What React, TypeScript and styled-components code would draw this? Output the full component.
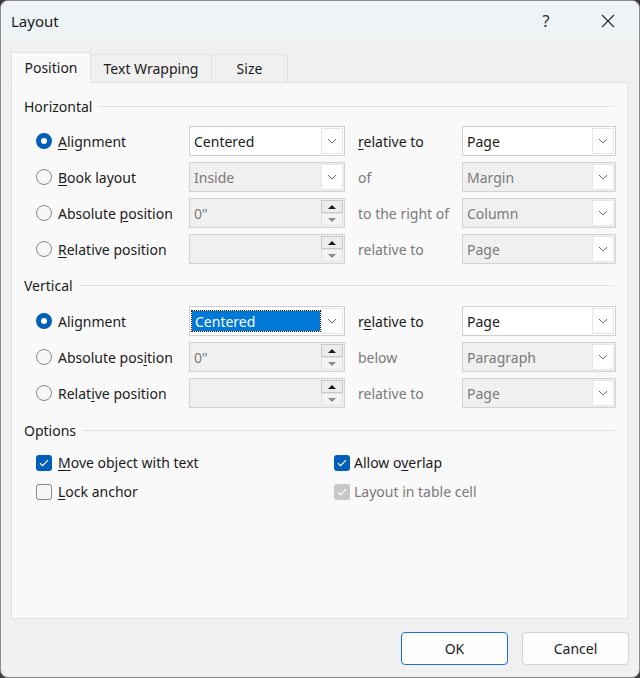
import React from "react"
import styled, { createGlobalStyle } from "styled-components"

const GlobalStyle = createGlobalStyle`
  html, body {
    margin: 0;
    padding: 0;
    background: #3c3c3c;
  }
  body {
    font-family: "Noto Sans", "Open Sans", sans-serif;
    font-size: 14px;
    color: #1b1b1b;
  }
`

const Window = styled.div`
  width: 638px;
  height: 676px;
  border: 1px solid #8c8c8c;
  border-radius: 8px;
  overflow: hidden;
  background: #f0f0f0;
  display: flex;
  flex-direction: column;
`

const TitleBar = styled.div`
  height: 39px;
  background: #eef3f6;
  display: flex;
  align-items: center;
  padding-left: 10px;
`

const Title = styled.div`
  flex: 1;
  font-size: 15px;
  color: #1a1a1a;
`

const TitleButton = styled.div`
  width: 62px;
  height: 39px;
  display: flex;
  align-items: center;
  justify-content: center;
  font-size: 16px;
  color: #2a2a2a;
`

const Body = styled.div`
  flex: 1;
  padding: 11px 10px 0 10px;
  display: flex;
  flex-direction: column;
`

const TabStrip = styled.div`
  display: flex;
  align-items: flex-end;
  height: 31px;
  position: relative;
  z-index: 1;
`

const Tab = styled.div<{ $active?: boolean; $w: number }>`
  width: ${p => p.$w}px;
  height: ${p => (p.$active ? 31 : 28)}px;
  box-sizing: border-box;
  display: flex;
  align-items: center;
  justify-content: center;
  background: ${p => (p.$active ? "#f9f9f9" : "#f0f0f0")};
  border: 1px solid #e2e2e2;
  border-bottom: ${p => (p.$active ? "1px solid #f9f9f9" : "none")};
  border-left: ${p => (p.$active ? "1px solid #e2e2e2" : "none")};
  margin-bottom: ${p => (p.$active ? "-1px" : "0")};
  font-size: 14px;
  color: #1b1b1b;
`

const Panel = styled.div`
  width: 617px;
  height: 537px;
  box-sizing: border-box;
  background: #f9f9f9;
  border: 1px solid #e2e2e2;
  padding: 14px 12px 0 12px;
`

const Section = styled.div<{ $gap?: number }>`
  margin-top: ${p => p.$gap ?? 0}px;
`

const Heading = styled.div<{ $mb?: number }>`
  display: flex;
  align-items: center;
  height: 18px;
  margin-bottom: ${p => p.$mb ?? 8}px;
  font-size: 14px;
  color: #1b1b1b;

  &::after {
    content: "";
    flex: 1;
    height: 1px;
    background: #e3e3e3;
    margin-left: 6px;
  }
`

const Grid = styled.div`
  display: grid;
  grid-template-columns: 153px 156px 117px 154px;
  grid-auto-rows: 36px;
  align-items: center;
  padding-left: 12px;
`

const ChoiceLabel = styled.label<{ $disabled?: boolean; $gap?: number }>`
  display: flex;
  align-items: center;
  gap: ${p => p.$gap ?? 6}px;
  font-size: 14px;
  white-space: nowrap;
  color: ${p => (p.$disabled ? "#7a7a7a" : "#1b1b1b")};

  u {
    text-underline-offset: 2px;
  }
`

const SideLabel = styled.div<{ $disabled?: boolean }>`
  padding-left: 13px;
  font-size: 14px;
  white-space: nowrap;
  color: ${p => (p.$disabled ? "#7a7a7a" : "#1b1b1b")};

  u {
    text-underline-offset: 2px;
  }
`

const Radio = styled.span<{ $checked?: boolean }>`
  width: 16px;
  height: 16px;
  box-sizing: border-box;
  border-radius: 50%;
  flex-shrink: 0;
  border: ${p => (p.$checked ? "5px solid #005fb8" : "1px solid #8a8a8a")};
  background: ${p => (p.$checked ? "#ffffff" : "#f6f6f6")};
`

const Check = styled.span<{ $checked?: boolean; $disabled?: boolean }>`
  width: 16px;
  height: 16px;
  box-sizing: border-box;
  border-radius: 3px;
  flex-shrink: 0;
  display: flex;
  align-items: center;
  justify-content: center;
  background: ${p => (p.$disabled ? "#c8c8c8" : p.$checked ? "#005fb8" : "#f6f6f6")};
  border: ${p => (p.$checked || p.$disabled ? "none" : "1px solid #8a8a8a")};
`

const Field = styled.div<{ $disabled?: boolean }>`
  height: 30px;
  box-sizing: border-box;
  border: 1px solid ${p => (p.$disabled ? "#d2d2d2" : "#cfcfcf")};
  background: ${p => (p.$disabled ? "#f0f0f0" : "#ffffff")};
  display: flex;
  align-items: stretch;
  padding: 1px;
`

const FieldText = styled.div<{ $disabled?: boolean; $selected?: boolean }>`
  flex: 1;
  display: flex;
  align-items: center;
  padding-left: 3px;
  margin: ${p => (p.$selected ? "3px 1px" : "0")};
  font-size: 14px;
  color: ${p => (p.$selected ? "#ffffff" : p.$disabled ? "#7a7a7a" : "#1b1b1b")};
  background: ${p => (p.$selected ? "#0078d7" : "transparent")};
  outline: ${p => (p.$selected ? "1px dotted #1a1a1a" : "none")};
`

const ArrowBox = styled.div`
  width: 22px;
  box-sizing: border-box;
  background: #ffffff;
  border: 1px solid #e6e6e6;
  display: flex;
  align-items: center;
  justify-content: center;
`

const SpinButtons = styled.div`
  width: 22px;
  display: flex;
  flex-direction: column;
`

const SpinButton = styled.div<{ $up?: boolean }>`
  flex: 1;
  box-sizing: border-box;
  border: 1px solid ${p => (p.$up ? "#c9c9c9" : "#e2e2e2")};
  background: ${p => (p.$up ? "#ececec" : "#f3f3f3")};
  display: flex;
  align-items: center;
  justify-content: center;
`

const Tri = styled.span<{ $up?: boolean }>`
  width: 0;
  height: 0;
  border-left: 4px solid transparent;
  border-right: 4px solid transparent;
  ${p =>
    p.$up
      ? "border-bottom: 4px solid #1b1b1b;"
      : "border-top: 4px solid #8a8a8a;"}
`

const OptionGrid = styled.div`
  display: grid;
  grid-template-columns: 298px 1fr;
  grid-auto-rows: 29px;
  align-items: center;
  padding-left: 12px;
  margin-top: 9px;
`

const Footer = styled.div`
  display: flex;
  justify-content: flex-end;
  gap: 14px;
  padding: 13px 0 0 0;
`

const Button = styled.button<{ $primary?: boolean }>`
  width: 107px;
  height: 33px;
  box-sizing: border-box;
  border-radius: 4px;
  border: 1px solid ${p => (p.$primary ? "#1a73c8" : "#d3d3d3")};
  background: #fdfdfd;
  font-family: "Noto Sans", "Open Sans", sans-serif;
  font-size: 14px;
  color: #1b1b1b;
`

const Chevron = () => (
  <svg width="10" height="6" viewBox="0 0 10 6">
    <path d="M1 1 L5 5 L9 1" fill="none" stroke="#6b6b6b" strokeWidth="1" />
  </svg>
)

const CheckMark = () => (
  <svg width="10" height="8" viewBox="0 0 10 8">
    <path d="M1 4.2 L3.6 6.6 L9 1.2" fill="none" stroke="#ffffff" strokeWidth="1.2" />
  </svg>
)

const Select = ({ value, disabled, selected }: { value: string; disabled?: boolean; selected?: boolean }) => (
  <Field $disabled={disabled}>
    <FieldText $disabled={disabled} $selected={selected}>{value}</FieldText>
    <ArrowBox><Chevron /></ArrowBox>
  </Field>
)

const Spin = ({ value }: { value: string }) => (
  <Field $disabled>
    <FieldText $disabled>{value}</FieldText>
    <SpinButtons>
      <SpinButton $up><Tri $up /></SpinButton>
      <SpinButton><Tri /></SpinButton>
    </SpinButtons>
  </Field>
)

const App = () => {
  return (
    <>
      <GlobalStyle />
      <Window>
        <TitleBar>
          <Title>Layout</Title>
          <TitleButton>?</TitleButton>
          <TitleButton>
            <svg width="14" height="14" viewBox="0 0 14 14">
              <path d="M1 1 L13 13 M13 1 L1 13" stroke="#2a2a2a" strokeWidth="1.1" />
            </svg>
          </TitleButton>
        </TitleBar>

        <Body>
          <TabStrip>
            <Tab $active $w={80}>Position</Tab>
            <Tab $w={121}>Text Wrapping</Tab>
            <Tab $w={76}>Size</Tab>
          </TabStrip>

          <Panel>
            <Section>
              <Heading>Horizontal</Heading>
              <Grid>
                <ChoiceLabel><Radio $checked /><span><u>A</u>lignment</span></ChoiceLabel>
                <Select value="Centered" />
                <SideLabel><u>r</u>elative to</SideLabel>
                <Select value="Page" />

                <ChoiceLabel><Radio /><span><u>B</u>ook layout</span></ChoiceLabel>
                <Select value="Inside" disabled />
                <SideLabel $disabled>of</SideLabel>
                <Select value="Margin" disabled />

                <ChoiceLabel><Radio /><span>Absolute <u>p</u>osition</span></ChoiceLabel>
                <Spin value={'0"'} />
                <SideLabel $disabled>to the right of</SideLabel>
                <Select value="Column" disabled />

                <ChoiceLabel><Radio /><span><u>R</u>elative position</span></ChoiceLabel>
                <Spin value="" />
                <SideLabel $disabled>relative to</SideLabel>
                <Select value="Page" disabled />
              </Grid>
            </Section>

            <Section $gap={9}>
              <Heading $mb={9}>Vertical</Heading>
              <Grid>
                <ChoiceLabel><Radio $checked /><span>Ali<u>g</u>nment</span></ChoiceLabel>
                <Select value="Centered" selected />
                <SideLabel>r<u>e</u>lative to</SideLabel>
                <Select value="Page" />

                <ChoiceLabel><Radio /><span>Absolute pos<u>i</u>tion</span></ChoiceLabel>
                <Spin value={'0"'} />
                <SideLabel $disabled>below</SideLabel>
                <Select value="Paragraph" disabled />

                <ChoiceLabel><Radio /><span>Relat<u>i</u>ve position</span></ChoiceLabel>
                <Spin value="" />
                <SideLabel $disabled>relative to</SideLabel>
                <Select value="Page" disabled />
              </Grid>
            </Section>

            <Section $gap={10}>
              <Heading>Options</Heading>
              <OptionGrid>
                <ChoiceLabel><Check $checked><CheckMark /></Check><span><u>M</u>ove object with text</span></ChoiceLabel>
                <ChoiceLabel $gap={4}><Check $checked><CheckMark /></Check><span>Allow o<u>v</u>erlap</span></ChoiceLabel>
                <ChoiceLabel><Check /><span><u>L</u>ock anchor</span></ChoiceLabel>
                <ChoiceLabel $disabled $gap={4}><Check $checked $disabled><CheckMark /></Check><span>Layout in table cell</span></ChoiceLabel>
              </OptionGrid>
            </Section>
          </Panel>

          <Footer>
            <Button $primary>OK</Button>
            <Button>Cancel</Button>
          </Footer>
        </Body>
      </Window>
    </>
  )
}

export default App
